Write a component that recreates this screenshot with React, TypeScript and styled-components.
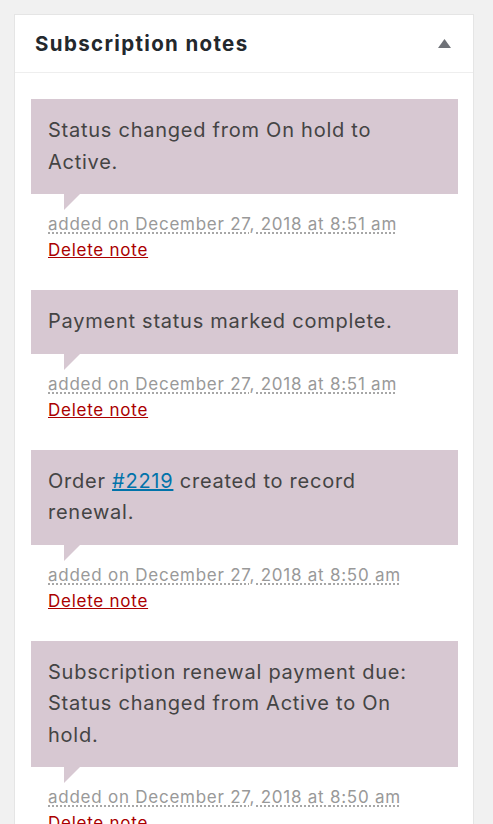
import * as React from 'react';
import styled, { createGlobalStyle } from 'styled-components';

const GlobalStyle = createGlobalStyle`
  body {
    margin: 0;
    background: #f1f1f1;
    font-family: Inter, 'Noto Sans', 'Liberation Sans', sans-serif;
  }
`;

const Panel = styled.div`
  box-sizing: border-box;
  width: 460px;
  margin: 14px 0 0 14px;
  min-height: 810px;
  background: #fff;
  border: 1px solid #e5e5e5;
`;

const Header = styled.div`
  display: flex;
  align-items: center;
  justify-content: space-between;
  height: 57px;
  padding: 0 22px 0 20px;
  border-bottom: 1px solid #eeeeee;
`;

const Title = styled.h2`
  margin: 0;
  font-size: 20.5px;
  font-weight: 700;
  letter-spacing: 1.35px;
  color: #23282d;
`;

const Toggle = styled.button`
  display: flex;
  padding: 0;
  border: none;
  background: transparent;
  cursor: pointer;
`;

const NoteList = styled.ul`
  list-style: none;
  margin: 0;
  padding: 26px 15px 0 16px;
`;

const NoteItem = styled.li`
  margin-bottom: 27px;
`;

const NoteContent = styled.div`
  position: relative;
  padding: 16px 17px;
  background: #d7c8d2;
  color: #444;
  font-size: 20px;
  line-height: 31.5px;
  letter-spacing: 0.75px;

  &::after {
    content: '';
    position: absolute;
    bottom: -16px;
    left: 33px;
    width: 0;
    height: 0;
    border-width: 16px 16px 0 0;
    border-style: solid;
    border-color: #d7c8d2 transparent;
  }

  a {
    color: #0073aa;
  }
`;

const Meta = styled.p`
  margin: 0;
  padding: 17px 17px 0;
  font-size: 17px;
  line-height: 26px;
  letter-spacing: 0.75px;
  color: #999;
`;

const Stamp = styled.abbr`
  text-decoration: underline dotted;
  text-underline-offset: 3px;
`;

const DeleteLink = styled.a`
  display: inline-block;
  color: #a00;
  text-decoration: underline;
`;

const notes = [
  { text: <>Status changed from On hold to Active.</>, time: '8:51 am' },
  { text: <>Payment status marked complete.</>, time: '8:51 am' },
  { text: <>Order <a href="#">#2219</a> created to record renewal.</>, time: '8:50 am' },
  { text: <>Subscription renewal payment due: Status changed from Active to On hold.</>, time: '8:50 am' },
];

export default function App() {
  return (
    <>
      <GlobalStyle />
      <Panel>
        <Header>
          <Title>Subscription notes</Title>
          <Toggle aria-label="Toggle panel">
            <svg width="13" height="9" viewBox="0 0 13 9">
              <path d="M6.5 0 L13 9 L0 9 Z" fill="#6f7278" />
            </svg>
          </Toggle>
        </Header>
        <NoteList>
          {notes.map((n, i) => (
            <NoteItem key={i}>
              <NoteContent>{n.text}</NoteContent>
              <Meta>
                <Stamp title="2018-12-27">added on December 27, 2018 at {n.time}</Stamp>
                <br />
                <DeleteLink href="#">Delete note</DeleteLink>
              </Meta>
            </NoteItem>
          ))}
        </NoteList>
      </Panel>
    </>
  );
}
